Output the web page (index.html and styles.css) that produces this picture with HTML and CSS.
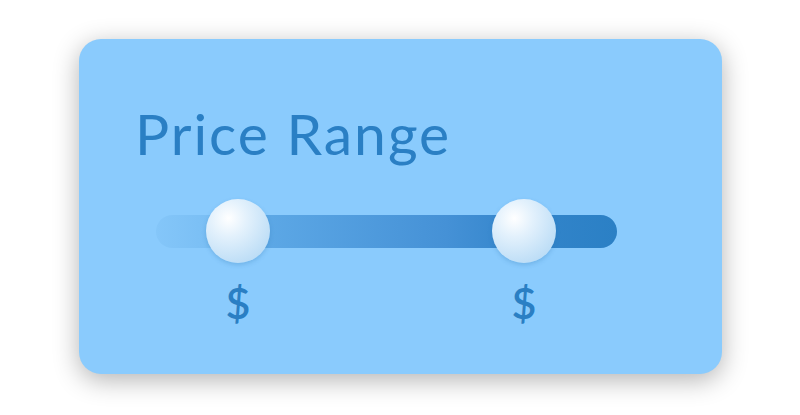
FILE: index.html
```html
<!DOCTYPE html>
<html lang="en">
<head>
    <meta charset="UTF-8">
    <meta name="viewport" content="width=device-width, initial-scale=1.0">
    <title>Price Range</title>
    <link rel="stylesheet" href="styles.css">
</head>
<body>
    <div class="card">
        <!-- Heading -->
        <h1 class="title">Price Range</h1>

        <!-- Range slider -->
        <div class="slider">
            <div class="track">
                <div class="fill"></div>
            </div>
            <div class="thumb thumb-min"></div>
            <div class="thumb thumb-max"></div>
        </div>

        <!-- Value labels -->
        <div class="labels">
            <span class="label label-min">$</span>
            <span class="label label-max">$</span>
        </div>
    </div>
</body>
</html>
```

FILE: styles.css
```css
/* Page */
body {
    box-sizing: border-box;
    margin: 0;
    height: 100vh;
    padding: 39px 0 0 79px;
    background: #ffffff;
    font-family: Lato, "Noto Sans", sans-serif;
}

/* Card */
.card {
    box-sizing: border-box;
    width: 643px;
    height: 335px;
    padding: 66px 0 0 77px;
    background: #8acbfd;
    border-radius: 22px;
    box-shadow: 0px 6px 26px rgba(0, 0, 0, 0.3);
}

.title {
    margin: 0 0 37px -21px;
    font-size: 57px;
    font-weight: 400;
    line-height: 1;
    letter-spacing: 2px;
    color: #2a7fc4;
}

/* Slider */
.slider {
    position: relative;
    width: 461px;
    height: 64px;
    display: flex;
    align-items: center;
}

.track {
    width: 100%;
    height: 33px;
    border-radius: 17px;
    overflow: hidden;
    background: linear-gradient(90deg, #84c6f9 0%, #74baf1 18%);
    display: flex;
    justify-content: flex-end;
}

.fill {
    width: 82%;
    height: 100%;
    background: linear-gradient(90deg, #60abe8 0%, #4591d6 55%, #3385cb 75%, #2b80c5 100%);
}

.thumb {
    position: absolute;
    top: 0;
    width: 64px;
    height: 64px;
    border-radius: 50%;
    background: radial-gradient(circle at 35% 30%, #ffffff 0%, #e3f1fc 30%, #c2e0f7 70%, #acd4f2 100%);
    box-shadow: 0px 2px 4px rgba(40, 110, 170, 0.25);
}

.thumb-min {
    left: 50px;
}

.thumb-max {
    left: 336px;
}

/* Labels */
.labels {
    display: flex;
    width: 461px;
    margin-top: 18px;
}

.label {
    width: 40px;
    text-align: center;
    font-size: 43px;
    font-weight: 600;
    line-height: 1;
    color: #2a7fc4;
}

.label-min {
    margin-left: 62px;
}

.label-max {
    margin-left: 246px;
}
```
